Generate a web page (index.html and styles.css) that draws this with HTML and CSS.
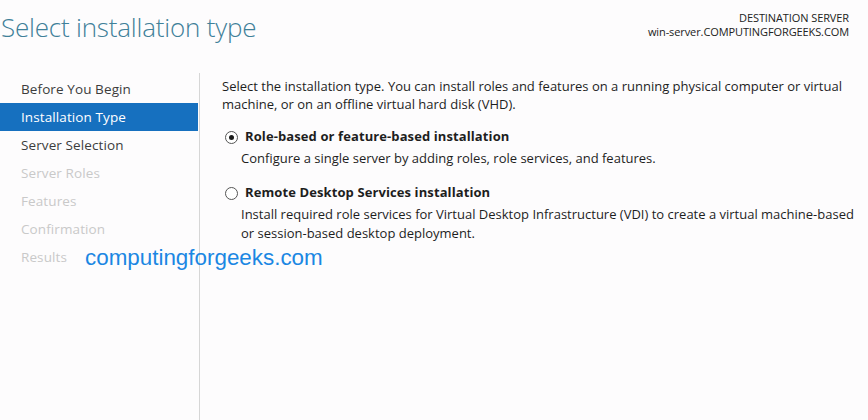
FILE: index.html
```html
<!DOCTYPE html>
<html lang="en">
<head>
    <meta charset="UTF-8">
    <title>Add Roles and Features Wizard</title>
    <link rel="stylesheet" href="styles.css">
</head>
<body>
    <!-- Header -->
    <div class="header">
        <h1 class="title">Select installation type</h1>
        <div class="destination">
            <div>DESTINATION SERVER</div>
            <div>win-server.COMPUTINGFORGEEKS.COM</div>
        </div>
    </div>

    <!-- Wizard body -->
    <div class="wizard">
        <ul class="steps">
            <li>Before You Begin</li>
            <li class="active">Installation Type</li>
            <li>Server Selection</li>
            <li class="disabled">Server Roles</li>
            <li class="disabled">Features</li>
            <li class="disabled">Confirmation</li>
            <li class="disabled">Results</li>
        </ul>

        <div class="content">
            <p class="intro">Select the installation type. You can install roles and features on a running physical computer or virtual machine, or on an offline virtual hard disk (VHD).</p>

            <div class="option">
                <span class="radio checked"></span>
                <div>
                    <div class="option-title">Role-based or feature-based installation</div>
                    <div class="option-desc">Configure a single server by adding roles, role services, and features.</div>
                </div>
            </div>

            <div class="option">
                <span class="radio"></span>
                <div>
                    <div class="option-title">Remote Desktop Services installation</div>
                    <div class="option-desc">Install required role services for Virtual Desktop Infrastructure (VDI) to create a virtual machine-based or session-based desktop deployment.</div>
                </div>
            </div>
        </div>
    </div>

    <!-- Watermark -->
    <div class="watermark">computingforgeeks.com</div>
</body>
</html>
```
FILE: styles.css
```css
/* General */
body {
    margin: 0;
    height: 420px;
    overflow: hidden;
    position: relative;
    background-color: #fdfcfd;
    font-family: "Open Sans", "Noto Sans", sans-serif;
    color: #1e1e1e;
}

/* Header */
.header {
    display: flex;
    justify-content: space-between;
    align-items: flex-start;
    height: 73px;
}

.title {
    margin: 9px 0 0 1px;
    font-size: 26px;
    font-weight: 300;
    color: #3f8099;
    letter-spacing: -0.2px;
}

.destination {
    margin: 11px 19px 0 0;
    text-align: right;
    font-size: 11px;
    line-height: 14px;
    color: #222;
    letter-spacing: -0.1px;
}

/* Wizard layout */
.wizard {
    display: flex;
    height: 347px;
}

.steps {
    flex: none;
    list-style: none;
    margin: 0;
    padding: 2px 0 0;
    width: 199px;
    border-right: 1px solid #d6d6d6;
    font-size: 13.5px;
    letter-spacing: 0.1px;
}

.steps li {
    height: 28px;
    line-height: 28px;
    padding-left: 21px;
    margin-right: 1px;
    color: #3c3c3c;
}

.steps li.active {
    background-color: #1670bf;
    color: #ffffff;
}

.steps li.disabled {
    color: #c9c9c9;
}

/* Content */
.content {
    flex: 1;
    padding: 4px 0 0 22px;
    font-size: 13px;
    line-height: 18px;
}

.intro {
    margin: 0 0 14px;
    width: 640px;
}

.option {
    display: flex;
    gap: 7px;
    margin: 0 0 15px 3px;
}

.radio {
    flex: none;
    width: 11px;
    height: 11px;
    margin-top: 4px;
    border: 1px solid #555;
    border-radius: 50%;
    background: #fff;
    position: relative;
}

.radio.checked::after {
    content: "";
    position: absolute;
    top: 3px;
    left: 3px;
    width: 5px;
    height: 5px;
    border-radius: 50%;
    background: #1a1a1a;
}

.option-title {
    font-weight: 700;
    font-size: 13px;
    letter-spacing: 0.1px;
    margin-bottom: 4px;
}

.option-desc {
    margin-left: -4px;
    width: 620px;
    line-height: 19px;
}

/* Watermark overlay */
.watermark {
    position: absolute;
    left: 85px;
    top: 245px;
    font-family: "Liberation Sans", Arial, sans-serif;
    font-size: 22.4px;
    color: #1b87e3;
}
```
